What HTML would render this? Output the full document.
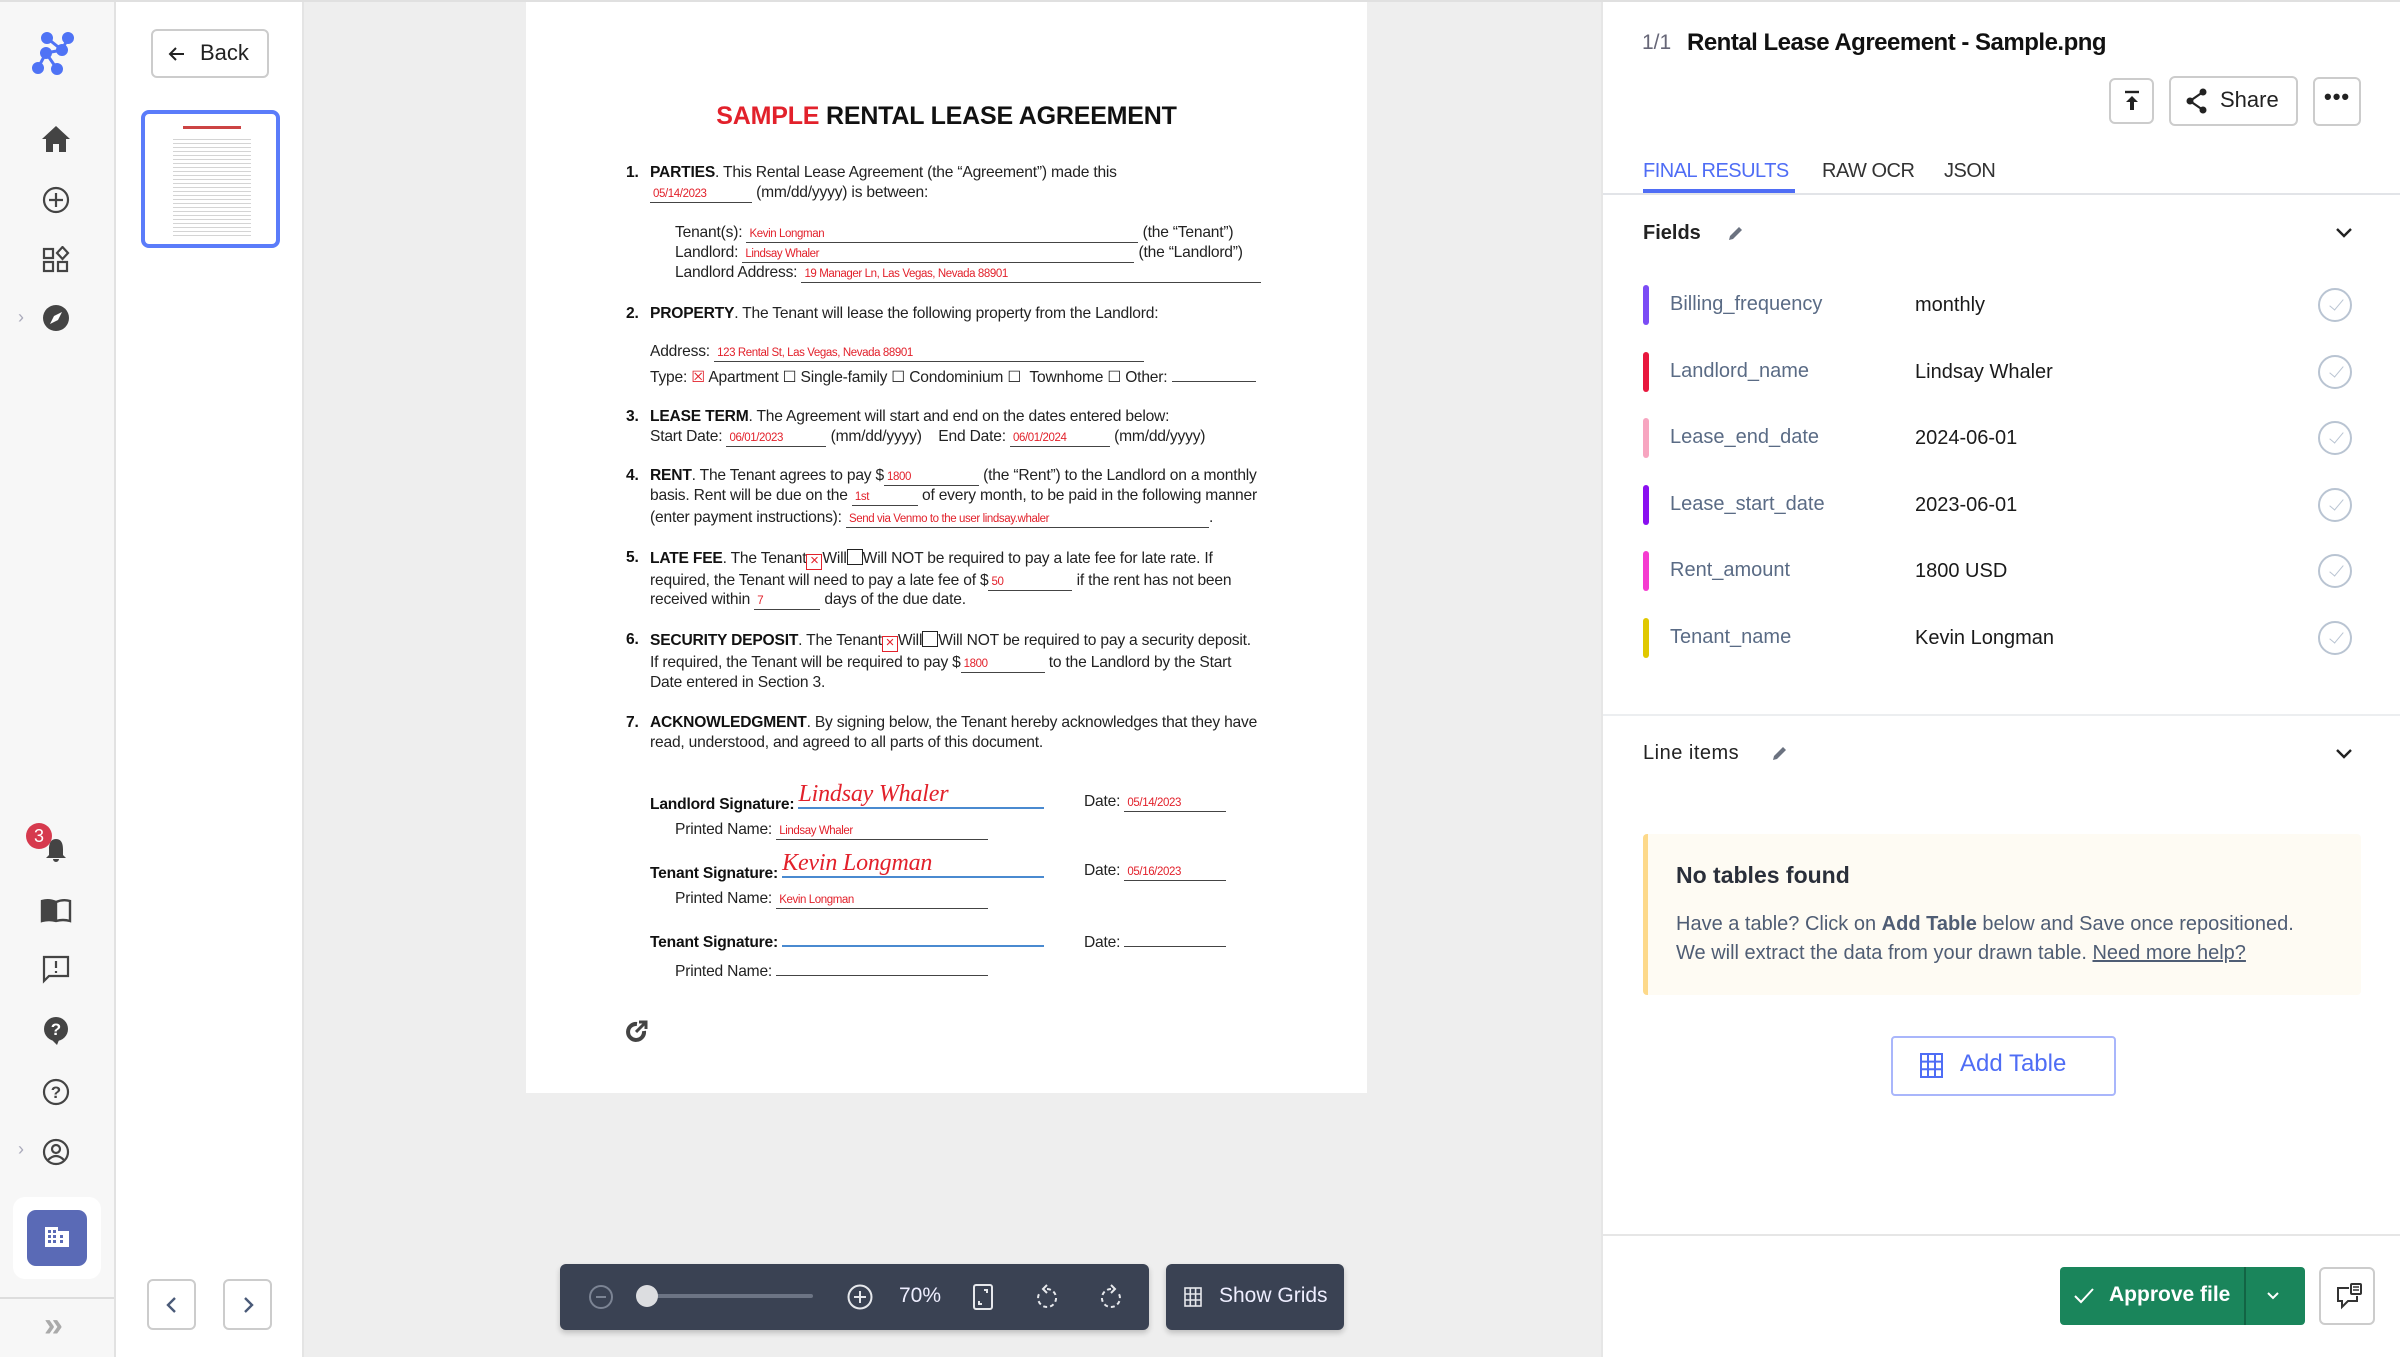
<!DOCTYPE html>
<html><head><meta charset="utf-8"><style>
*{box-sizing:border-box;margin:0;padding:0}
body{width:2400px;height:1357px;overflow:hidden;background:#eeeeee;font-family:"Liberation Sans",sans-serif;position:relative}
.a{position:absolute}
.nav{left:0;top:0;width:116px;height:1357px;background:#f7f7f7;border-right:2px solid #e2e2e2}
.thumbs{left:116px;top:0;width:188px;height:1357px;background:#fff;border-right:2px solid #e4e4e4}
.btn{position:absolute;border:2px solid #ccc;border-radius:6px;background:#fff}
.doc{left:526px;top:2px;width:841px;height:1091px;background:#fff}
.d{position:absolute;white-space:nowrap;font-size:15.6px;line-height:18px;color:#222;letter-spacing:-0.2px}
.d b{color:#111}
.r{color:#e2212b;font-size:11.5px;letter-spacing:-0.4px}
.u{display:inline-block;border-bottom:1.5px solid #444;vertical-align:baseline;height:16px;line-height:14px;padding-left:3px}
.ub{display:inline-block;border-bottom:2px solid #4a8ad0;height:16px}
.cb{display:inline-block;width:16px;height:16px;border:1.5px solid #222;vertical-align:-2px}
.cx{border-color:#e2212b;color:#e2212b;font-size:15px;line-height:12px;text-align:center}
.right{left:1601px;top:0;width:799px;height:1357px;background:#fff;border-left:2px solid #e6e6e6}
.row{position:absolute;left:40px;width:740px;height:40px}
.bar{position:absolute;left:0;top:0;width:6px;height:40px;border-radius:3px}
.lab{position:absolute;left:27px;top:8px;font-size:20px;color:#5a6b85}
.val{position:absolute;left:272px;top:9px;font-size:20px;color:#1a1a1a}
.chk{position:absolute;left:675px;top:3px;width:34px;height:34px;border:2px solid #b9c4d2;border-radius:50%}
.chk:after{content:"";position:absolute;left:13px;top:6px;width:6px;height:13px;border-right:1.5px solid #b9c4d2;border-bottom:1.5px solid #b9c4d2;transform:rotate(40deg)}
.ic{fill:none;stroke:#444;stroke-width:2.2}
</style></head><body>

<!-- left nav -->
<div class="a nav">
 <svg class="a" style="left:32px;top:32px" width="44" height="44" viewBox="0 0 44 44"><g stroke="#4f73f5" stroke-width="3" fill="#4f73f5"><path d="M15 6 L30 18 L36 6 M30 18 L14 21 L6 36 M14 21 L25 37" fill="none"/><circle cx="15" cy="6" r="4.5"/><circle cx="36" cy="6" r="4.5"/><circle cx="30" cy="18" r="4.5"/><circle cx="14" cy="21" r="4.5"/><circle cx="6" cy="36" r="4.5"/><circle cx="25" cy="37" r="4.5"/></g></svg>
 <svg class="a" style="left:41px;top:125px" width="30" height="28" viewBox="0 0 30 28"><path d="M15 1 L1 14 H5 V27 H12 V19 H18 V27 H25 V14 H29 Z" fill="#444"/></svg>
 <svg class="a" style="left:42px;top:186px" width="28" height="28" viewBox="0 0 28 28"><circle cx="14" cy="14" r="12" class="ic" stroke-width="2.5"/><path d="M14 7V21M7 14H21" class="ic" stroke-width="2.8"/></svg>
 <svg class="a" style="left:42px;top:246px" width="28" height="28" viewBox="0 0 28 28"><g class="ic" stroke-width="2.4"><rect x="2" y="3" width="9" height="9"/><rect x="2" y="16" width="9" height="9"/><rect x="16" y="16" width="9" height="9"/><path d="M20.5 1 L26 7 L20.5 13 L15 7Z"/></g></svg>
 <div class="a" style="left:18px;top:307px;color:#aab;font-size:18px">›</div>
 <svg class="a" style="left:42px;top:304px" width="28" height="28" viewBox="0 0 28 28"><circle cx="14" cy="14" r="13" fill="#444"/><path d="M20 8 L12 12 L8 20 L16 16Z" fill="#fff"/></svg>
 <svg class="a" style="left:44px;top:837px" width="24" height="26" viewBox="0 0 24 26"><path d="M12 2 C6 2 5 8 5 12 V18 L2 21 H22 L19 18 V12 C19 8 18 2 12 2Z M9 22 a3 3 0 0 0 6 0Z" fill="#444"/></svg>
 <div class="a" style="left:26px;top:823px;width:26px;height:26px;border-radius:50%;background:#d63a4e;color:#fff;font-size:18px;text-align:center;line-height:26px">3</div>
 <svg class="a" style="left:40px;top:898px" width="32" height="26" viewBox="0 0 32 26"><path d="M2 3 Q9 1 16 4 Q23 1 30 3 V23 Q23 21 16 23 Q9 21 2 23Z M16 4V23" fill="none" stroke="#444" stroke-width="2.4"/><path d="M2 3 Q9 1 16 4 V23 Q9 21 2 23Z" fill="#444"/></svg>
 <svg class="a" style="left:42px;top:955px" width="28" height="30" viewBox="0 0 28 30"><path d="M2 2 H26 V21 H7 L2 26Z" class="ic" stroke-width="2.6"/><path d="M14 6 V13 M14 16V18" class="ic" stroke-width="3"/></svg>
 <svg class="a" style="left:43px;top:1016px" width="26" height="30" viewBox="0 0 26 30"><circle cx="13" cy="13" r="12" fill="#444"/><path d="M9 24 L14 29 L16 24Z" fill="#444"/><text x="13" y="19" font-size="17" font-weight="bold" fill="#fff" text-anchor="middle" font-family="Liberation Sans">?</text></svg>
 <svg class="a" style="left:42px;top:1078px" width="28" height="28" viewBox="0 0 28 28"><circle cx="14" cy="14" r="12" class="ic" stroke-width="2.5"/><text x="14" y="20" font-size="17" font-weight="bold" fill="#444" text-anchor="middle" font-family="Liberation Sans">?</text></svg>
 <div class="a" style="left:18px;top:1139px;color:#aab;font-size:18px">›</div>
 <svg class="a" style="left:42px;top:1138px" width="28" height="28" viewBox="0 0 28 28"><circle cx="14" cy="14" r="12" class="ic" stroke-width="2.5"/><circle cx="14" cy="11" r="4" class="ic" stroke-width="2.4"/><path d="M6 22 Q14 14 22 22" class="ic" stroke-width="2.4"/></svg>
 <div class="a" style="left:13px;top:1197px;width:88px;height:82px;background:#fff;border-radius:12px"></div>
 <div class="a" style="left:27px;top:1210px;width:60px;height:56px;background:#5a6ab6;border-radius:9px"></div>
 <svg class="a" style="left:44px;top:1226px" width="26" height="22" viewBox="0 0 26 22"><path d="M1 1H14V5H25V21H1Z" fill="#fff"/><g fill="#5a6ab6"><rect x="4" y="4" width="3" height="3"/><rect x="9" y="4" width="3" height="3"/><rect x="4" y="9" width="3" height="3"/><rect x="9" y="9" width="3" height="3"/><rect x="4" y="14" width="3" height="3"/><rect x="9" y="14" width="3" height="3"/><rect x="16" y="9" width="3" height="3"/><rect x="16" y="14" width="3" height="3"/></g></svg>
 <div class="a" style="left:0;top:1297px;width:114px;height:2px;background:#ddd"></div>
 <div class="a" style="left:44px;top:1306px;color:#aaa;font-size:34px;font-weight:bold;letter-spacing:-6px">»</div>
</div>

<!-- thumbs -->
<div class="a thumbs">
 <div class="btn" style="left:35px;top:29px;width:118px;height:49px"></div>
 <svg class="a" style="left:51px;top:44px" width="20" height="20" viewBox="0 0 20 20"><path d="M17 10H3M9 4L3 10L9 16" fill="none" stroke="#222" stroke-width="2"/></svg>
 <div class="a" style="left:84px;top:40px;font-size:22px;color:#222">Back</div>
 <div class="a" style="left:25px;top:110px;width:139px;height:138px;border:4px solid #5b7cfa;border-radius:8px;background:#fff;overflow:hidden">
  <div class="a" style="left:38px;top:12px;width:58px;height:3px;background:#c44"></div>
  <div class="a" style="left:28px;top:22px;width:78px;height:100px;background:repeating-linear-gradient(#fff 0,#fff 3px,#d4d4d4 3px,#d4d4d4 4px)"></div>
 </div>
 <div class="btn" style="left:31px;top:1279px;width:49px;height:51px"></div>
 <div class="btn" style="left:107px;top:1279px;width:49px;height:51px"></div>
 <svg class="a" style="left:48px;top:1296px" width="16" height="18" viewBox="0 0 16 18"><path d="M11 2L4 9L11 16" fill="none" stroke="#4a5a78" stroke-width="2.4"/></svg>
 <svg class="a" style="left:124px;top:1296px" width="16" height="18" viewBox="0 0 16 18"><path d="M5 2L12 9L5 16" fill="none" stroke="#4a5a78" stroke-width="2.4"/></svg>
</div>

<!-- document -->
<div class="a doc">
 <div class="d" style="left:0;width:841px;text-align:center;top:100px;font-size:25px;line-height:28px;font-weight:bold;color:#111"><span style="color:#e2212b">SAMPLE</span> RENTAL LEASE AGREEMENT</div>
 <div class="d" style="left:100px;top:162px"><b>1.</b></div>
 <div class="d" style="left:124px;top:162px"><b>PARTIES</b>. This Rental Lease Agreement (the “Agreement”) made this</div>
 <div class="d" style="left:124px;top:182px"><span class="u r" style="width:102px">05/14/2023</span> (mm/dd/yyyy) is between:</div>
 <div class="d" style="left:149px;top:222px">Tenant(s): <span class="u r" style="width:392px">Kevin Longman</span> (the “Tenant”)</div>
 <div class="d" style="left:149px;top:242px">Landlord: <span class="u r" style="width:392px">Lindsay Whaler</span> (the “Landlord”)</div>
 <div class="d" style="left:149px;top:262px">Landlord Address: <span class="u r" style="width:460px">19 Manager Ln, Las Vegas, Nevada 88901</span></div>
 <div class="d" style="left:100px;top:303px"><b>2.</b></div>
 <div class="d" style="left:124px;top:303px"><b>PROPERTY</b>. The Tenant will lease the following property from the Landlord:</div>
 <div class="d" style="left:124px;top:341px">Address: <span class="u r" style="width:430px">123 Rental St, Las Vegas, Nevada 88901</span></div>
 <div class="d" style="left:124px;top:364px">Type: <span style="color:#e2212b">☒</span> Apartment ☐ Single-family ☐ Condominium ☐ &nbsp;Townhome ☐ Other: <span class="u" style="width:84px"></span></div>
 <div class="d" style="left:100px;top:406px"><b>3.</b></div>
 <div class="d" style="left:124px;top:406px"><b>LEASE TERM</b>. The Agreement will start and end on the dates entered below:</div>
 <div class="d" style="left:124px;top:426px">Start Date: <span class="u r" style="width:100px">06/01/2023</span> (mm/dd/yyyy) &nbsp;&nbsp; End Date: <span class="u r" style="width:100px">06/01/2024</span> (mm/dd/yyyy)</div>
 <div class="d" style="left:100px;top:465px"><b>4.</b></div>
 <div class="d" style="left:124px;top:465px"><b>RENT</b>. The Tenant agrees to pay $<span class="u r" style="width:95px">1800</span> (the “Rent”) to the Landlord on a monthly</div>
 <div class="d" style="left:124px;top:485px">basis. Rent will be due on the <span class="u r" style="width:66px">1st</span> of every month, to be paid in the following manner</div>
 <div class="d" style="left:124px;top:507px">(enter payment instructions): <span class="u r" style="width:363px">Send via Venmo to the user lindsay.whaler</span>.</div>
 <div class="d" style="left:100px;top:547px"><b>5.</b></div>
 <div class="d" style="left:124px;top:547px"><b>LATE FEE</b>. The Tenant<span class="cb cx">×</span>Will<span class="cb"></span>Will NOT be required to pay a late fee for late rate. If</div>
 <div class="d" style="left:124px;top:570px">required, the Tenant will need to pay a late fee of $<span class="u r" style="width:84px">50</span> if the rent has not been</div>
 <div class="d" style="left:124px;top:589px">received within <span class="u r" style="width:66px">7</span> days of the due date.</div>
 <div class="d" style="left:100px;top:629px"><b>6.</b></div>
 <div class="d" style="left:124px;top:629px"><b>SECURITY DEPOSIT</b>. The Tenant<span class="cb cx">×</span>Will<span class="cb"></span>Will NOT be required to pay a security deposit.</div>
 <div class="d" style="left:124px;top:652px">If required, the Tenant will be required to pay $<span class="u r" style="width:84px">1800</span> to the Landlord by the Start</div>
 <div class="d" style="left:124px;top:672px">Date entered in Section 3.</div>
 <div class="d" style="left:100px;top:712px"><b>7.</b></div>
 <div class="d" style="left:124px;top:712px"><b>ACKNOWLEDGMENT</b>. By signing below, the Tenant hereby acknowledges that they have</div>
 <div class="d" style="left:124px;top:732px">read, understood, and agreed to all parts of this document.</div>
 <div class="d" style="left:124px;top:791px"><b>Landlord Signature:</b> <span class="ub" style="width:246px"><span style="font-family:'Liberation Serif',serif;font-style:italic;color:#e2212b;font-size:24px;position:relative;top:-8px">Lindsay Whaler</span></span></div>
 <div class="d" style="left:149px;top:819px">Printed Name: <span class="u r" style="width:212px">Lindsay Whaler</span></div>
 <div class="d" style="left:124px;top:860px"><b>Tenant Signature:</b> <span class="ub" style="width:262px"><span style="font-family:'Liberation Serif',serif;font-style:italic;color:#e2212b;font-size:24px;position:relative;top:-8px">Kevin Longman</span></span></div>
 <div class="d" style="left:149px;top:888px">Printed Name: <span class="u r" style="width:212px">Kevin Longman</span></div>
 <div class="d" style="left:124px;top:929px"><b>Tenant Signature:</b> <span class="ub" style="width:262px"></span></div>
 <div class="d" style="left:149px;top:958px">Printed Name: <span class="u" style="width:212px"></span></div>
 <div class="d" style="left:558px;top:791px">Date: <span class="u r" style="width:102px">05/14/2023</span></div>
 <div class="d" style="left:558px;top:860px">Date: <span class="u r" style="width:102px">05/16/2023</span></div>
 <div class="d" style="left:558px;top:929px">Date: <span class="u" style="width:102px"></span></div>
 <svg class="a" style="left:98px;top:1017px" width="26" height="26" viewBox="0 0 26 26"><path d="M20 12 A8 8 0 1 1 13 5" fill="none" stroke="#444" stroke-width="4"/><path d="M12 13 L21 4 M15 3H22V10" fill="none" stroke="#444" stroke-width="3"/></svg>
</div>

<!-- toolbar -->
<div class="a" style="left:560px;top:1264px;width:589px;height:66px;background:#3a4253;border-radius:6px;box-shadow:0 3px 6px rgba(0,0,0,.2)"></div>
<svg class="a" style="left:588px;top:1284px" width="26" height="26" viewBox="0 0 26 26"><circle cx="13" cy="13" r="11" fill="none" stroke="#7c8494" stroke-width="2"/><path d="M8 13H18" stroke="#7c8494" stroke-width="2"/></svg>
<div class="a" style="left:648px;top:1294px;width:165px;height:4px;background:#6c7484;border-radius:2px"></div>
<div class="a" style="left:636px;top:1285px;width:22px;height:22px;border-radius:50%;background:#dcdde0"></div>
<svg class="a" style="left:846px;top:1283px" width="28" height="28" viewBox="0 0 28 28"><circle cx="14" cy="14" r="11.5" fill="none" stroke="#e6e8ec" stroke-width="2"/><path d="M8 14H20M14 8V20" stroke="#e6e8ec" stroke-width="2"/></svg>
<div class="a" style="left:899px;top:1284px;color:#eef;font-size:21px">70%</div>
<svg class="a" style="left:972px;top:1283px" width="22" height="28" viewBox="0 0 22 28"><rect x="2" y="2" width="18" height="24" rx="2" fill="none" stroke="#e6e8ec" stroke-width="2"/><path d="M12 7H15V10M7 18V21H10" fill="none" stroke="#e6e8ec" stroke-width="2"/></svg>
<svg class="a" style="left:1034px;top:1283px" width="26" height="28" viewBox="0 0 26 28"><path d="M13 6 A9 9 0 1 1 5 11" fill="none" stroke="#e6e8ec" stroke-width="2" stroke-dasharray="4 3"/><path d="M13 2 L9 6 L13 10" fill="none" stroke="#e6e8ec" stroke-width="2"/></svg>
<svg class="a" style="left:1098px;top:1283px" width="26" height="28" viewBox="0 0 26 28"><path d="M13 6 A9 9 0 1 0 21 11" fill="none" stroke="#e6e8ec" stroke-width="2" stroke-dasharray="4 3"/><path d="M13 2 L17 6 L13 10" fill="none" stroke="#e6e8ec" stroke-width="2"/></svg>
<div class="a" style="left:1166px;top:1264px;width:178px;height:66px;background:#3a4253;border-radius:6px;box-shadow:0 3px 6px rgba(0,0,0,.2)"></div>
<svg class="a" style="left:1184px;top:1287px" width="18" height="20" viewBox="0 0 18 20"><g fill="none" stroke="#e6e8ec" stroke-width="1.6"><rect x="1" y="1" width="16" height="18"/><path d="M6.3 1V19M11.6 1V19M1 7H17M1 13H17"/></g></svg>
<div class="a" style="left:1219px;top:1284px;color:#eef;font-size:21px">Show Grids</div>

<!-- right panel -->
<div class="a right">
 <div class="a" style="left:39px;top:31px;font-size:21px;color:#667">1/1</div>
 <div class="a" style="left:84px;top:29px;font-size:24px;font-weight:bold;color:#111;letter-spacing:-0.5px">Rental Lease Agreement - Sample.png</div>
 <div class="btn" style="left:506px;top:78px;width:45px;height:46px"></div>
 <svg class="a" style="left:519px;top:90px" width="20" height="22" viewBox="0 0 20 22"><path d="M3 2H17" stroke="#222" stroke-width="2.4"/><path d="M10 6L4 12H8V20H12V12H16Z" fill="#222"/></svg>
 <div class="btn" style="left:566px;top:76px;width:129px;height:50px"></div>
 <svg class="a" style="left:582px;top:88px" width="24" height="26" viewBox="0 0 24 26"><g fill="#222"><circle cx="18" cy="4" r="3.5"/><circle cx="5" cy="13" r="3.5"/><circle cx="18" cy="22" r="3.5"/></g><path d="M18 4L5 13L18 22" fill="none" stroke="#222" stroke-width="2.2"/></svg>
 <div class="a" style="left:617px;top:87px;font-size:22px;color:#222">Share</div>
 <div class="btn" style="left:710px;top:77px;width:48px;height:49px"></div>
 <div class="a" style="left:721px;top:84px;font-size:22px;font-weight:bold;color:#222;letter-spacing:1px">•••</div>
 <div class="a" style="left:40px;top:160px;font-size:20px;color:#4f6df5;letter-spacing:-0.5px">FINAL RESULTS</div>
 <div class="a" style="left:40px;top:189px;width:152px;height:4px;background:#4f6df5"></div>
 <div class="a" style="left:219px;top:160px;font-size:20px;color:#333;letter-spacing:-0.5px">RAW OCR</div>
 <div class="a" style="left:341px;top:160px;font-size:20px;color:#333;letter-spacing:-0.5px">JSON</div>
 <div class="a" style="left:0;top:193px;width:799px;height:2px;background:#e2e4e8"></div>
 <div class="a" style="left:40px;top:222px;font-size:20px;font-weight:bold;color:#222">Fields</div>
 <svg class="a" style="left:123px;top:225px" width="18" height="18" viewBox="0 0 18 18"><path d="M3 15L4 11L13 2L16 5L7 14Z" fill="#6b7280"/></svg>
 <svg class="a" style="left:732px;top:226px" width="18" height="14" viewBox="0 0 18 14"><path d="M2 3L9 10L16 3" fill="none" stroke="#222" stroke-width="2.4"/></svg>

 <div class="row" style="top:285px"><div class="bar" style="background:#7b4cf5"></div><div class="lab">Billing_frequency</div><div class="val">monthly</div><div class="chk"></div></div>
 <div class="row" style="top:352px"><div class="bar" style="background:#e8173d"></div><div class="lab">Landlord_name</div><div class="val">Lindsay Whaler</div><div class="chk"></div></div>
 <div class="row" style="top:418px"><div class="bar" style="background:#f7a5c0"></div><div class="lab">Lease_end_date</div><div class="val">2024-06-01</div><div class="chk"></div></div>
 <div class="row" style="top:485px"><div class="bar" style="background:#8a0ff0"></div><div class="lab">Lease_start_date</div><div class="val">2023-06-01</div><div class="chk"></div></div>
 <div class="row" style="top:551px"><div class="bar" style="background:#f53bd0"></div><div class="lab">Rent_amount</div><div class="val">1800 USD</div><div class="chk"></div></div>
 <div class="row" style="top:618px"><div class="bar" style="background:#e0c800"></div><div class="lab">Tenant_name</div><div class="val">Kevin Longman</div><div class="chk"></div></div>

 <div class="a" style="left:0;top:714px;width:799px;height:2px;background:#eceef0"></div>
 <div class="a" style="left:40px;top:742px;font-size:20px;color:#222;letter-spacing:0.5px">Line items</div>
 <svg class="a" style="left:167px;top:745px" width="18" height="18" viewBox="0 0 18 18"><path d="M3 15L4 11L13 2L16 5L7 14Z" fill="#6b7280"/></svg>
 <svg class="a" style="left:732px;top:747px" width="18" height="14" viewBox="0 0 18 14"><path d="M2 3L9 10L16 3" fill="none" stroke="#222" stroke-width="2.4"/></svg>

 <div class="a" style="left:40px;top:834px;width:718px;height:161px;background:#fefbf3;border-left:5px solid #fdd98a;border-radius:4px"></div>
 <div class="a" style="left:73px;top:862px;font-size:23px;font-weight:bold;color:#2a2f3a">No tables found</div>
 <div class="a" style="left:73px;top:910px;font-size:20px;color:#4f5d74;line-height:29px;white-space:nowrap">Have a table? Click on <b>Add Table</b> below and Save once repositioned.<br>We will extract the data from your drawn table. <u>Need more help?</u></div>
 <div class="a" style="left:288px;top:1036px;width:225px;height:60px;border:2px solid #a9b6fb;border-radius:4px"></div>
 <svg class="a" style="left:317px;top:1053px" width="24" height="26" viewBox="0 0 24 26"><g fill="none" stroke="#4f6df5" stroke-width="2"><rect x="1" y="1" width="21" height="23"/><path d="M8 1V24M15 1V24M1 8.6H22M1 16.3H22"/></g></svg>
 <div class="a" style="left:357px;top:1050px;font-size:24px;color:#4f6df5">Add Table</div>

 <div class="a" style="left:0;top:1234px;width:799px;height:2px;background:#e6e6e6"></div>
 <div class="a" style="left:457px;top:1267px;width:245px;height:58px;background:#1a855b;border-radius:4px"></div>
 <div class="a" style="left:641px;top:1267px;width:2px;height:58px;background:#126444"></div>
 <svg class="a" style="left:470px;top:1286px" width="22" height="20" viewBox="0 0 22 20"><path d="M2 10L8 16L20 3" fill="none" stroke="#fff" stroke-width="2"/></svg>
 <div class="a" style="left:506px;top:1283px;font-size:21px;font-weight:bold;color:#fff">Approve file</div>
 <svg class="a" style="left:662px;top:1290px" width="16" height="12" viewBox="0 0 16 12"><path d="M3 3L8 8L13 3" fill="none" stroke="#fff" stroke-width="2"/></svg>
 <div class="btn" style="left:716px;top:1267px;width:56px;height:58px"></div>
 <svg class="a" style="left:732px;top:1282px" width="28" height="28" viewBox="0 0 28 28"><path d="M14 6H3V19H7V25L13 19H22V14" fill="none" stroke="#333" stroke-width="2"/><rect x="16" y="2" width="10" height="10" rx="1" fill="none" stroke="#333" stroke-width="2"/><path d="M18 5H24M18 8H24" stroke="#333" stroke-width="1.5"/></svg>
</div>
<div class="a" style="left:0;top:0;width:2400px;height:2px;background:#e0e0e0"></div>
</body></html>
